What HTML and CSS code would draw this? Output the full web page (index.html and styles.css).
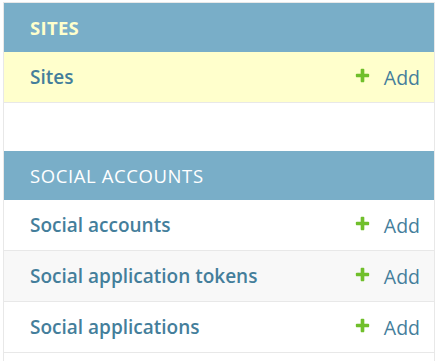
FILE: index.html
```html
<!DOCTYPE html>
<html lang="en">

<head>
    <meta charset="UTF-8">
    <meta name="viewport" content="width=device-width, initial-scale=1.0">
    <title>Site administration</title>
    <link rel="stylesheet" href="styles.css">
</head>

<body>
    <div class="app-list">
        <div class="module current-app">
            <div class="caption"><a class="section" href="#">Sites</a></div>
            <div class="model-row current-model">
                <a class="model-name" href="#">Sites</a>
                <a class="addlink" href="#">
                    <svg class="plus" viewBox="0 0 1792 1792"><path fill="#70bf2b" d="M1600 796v192q0 40-28 68t-68 28h-416v416q0 40-28 68t-68 28h-192q-40 0-68-28t-28-68v-416h-416q-40 0-68-28t-28-68v-192q0-40 28-68t68-28h416v-416q0-40 28-68t68-28h192q40 0 68 28t28 68v416h416q40 0 68 28t28 68z"/></svg>
                    Add
                </a>
            </div>
        </div>

        <div class="module">
            <div class="caption"><a class="section" href="#">Social Accounts</a></div>
            <div class="model-row">
                <a class="model-name" href="#">Social accounts</a>
                <a class="addlink" href="#">
                    <svg class="plus" viewBox="0 0 1792 1792"><path fill="#70bf2b" d="M1600 796v192q0 40-28 68t-68 28h-416v416q0 40-28 68t-68 28h-192q-40 0-68-28t-28-68v-416h-416q-40 0-68-28t-28-68v-192q0-40 28-68t68-28h416v-416q0-40 28-68t68-28h192q40 0 68 28t28 68v416h416q40 0 68 28t28 68z"/></svg>
                    Add
                </a>
            </div>
            <div class="model-row">
                <a class="model-name" href="#">Social application tokens</a>
                <a class="addlink" href="#">
                    <svg class="plus" viewBox="0 0 1792 1792"><path fill="#70bf2b" d="M1600 796v192q0 40-28 68t-68 28h-416v416q0 40-28 68t-68 28h-192q-40 0-68-28t-28-68v-416h-416q-40 0-68-28t-28-68v-192q0-40 28-68t68-28h416v-416q0-40 28-68t68-28h192q40 0 68 28t28 68v416h416q40 0 68 28t28 68z"/></svg>
                    Add
                </a>
            </div>
            <div class="model-row">
                <a class="model-name" href="#">Social applications</a>
                <a class="addlink" href="#">
                    <svg class="plus" viewBox="0 0 1792 1792"><path fill="#70bf2b" d="M1600 796v192q0 40-28 68t-68 28h-416v416q0 40-28 68t-68 28h-192q-40 0-68-28t-28-68v-416h-416q-40 0-68-28t-28-68v-192q0-40 28-68t68-28h416v-416q0-40 28-68t68-28h192q40 0 68 28t28 68v416h416q40 0 68 28t28 68z"/></svg>
                    Add
                </a>
            </div>
        </div>
    </div>
</body>

</html>
```

FILE: styles.css
```css
body {
    margin: 0;
    background: #fff;
    font-family: "Open Sans", "Noto Sans", sans-serif;
    overflow: hidden;
}

a {
    text-decoration: none;
}

.app-list {
    margin: 2px 0 0 3px;
    width: 430px;
    height: 360px;
    border: 1px solid #e8e8e8;
    display: flex;
    flex-direction: column;
    gap: 48px;
}

.caption {
    height: 49px;
    background-color: #79aec8;
    display: flex;
    align-items: center;
    padding-left: 26px;
}

.caption .section {
    color: #fff;
    font-size: 18.5px;
    text-transform: uppercase;
    letter-spacing: 0.6px;
}

.current-app .section {
    color: #ffc;
    font-weight: bold;
    letter-spacing: 0.3px;
}

.model-row {
    height: 50px;
    border-bottom: 1px solid #e8e8e8;
    display: flex;
    align-items: center;
    justify-content: space-between;
    padding: 0 14px 0 26px;
}

.model-row:nth-child(odd) {
    background-color: #f8f8f8;
}

.current-model {
    background-color: #ffc;
}

.model-name {
    color: #447e9b;
    font-size: 19px;
    font-weight: 600;
}

.addlink {
    color: #447e9b;
    font-size: 19.5px;
    display: flex;
    align-items: center;
    gap: 13px;
}

.plus {
    width: 17px;
    height: 17px;
    margin-top: -4px;
}
```
